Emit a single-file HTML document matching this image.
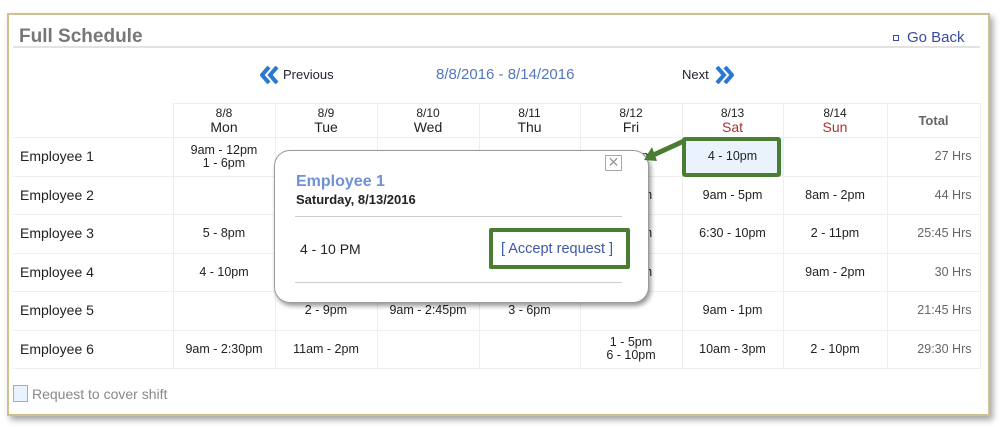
<!DOCTYPE html>
<html><head><meta charset="utf-8"><style>
*{margin:0;padding:0;box-sizing:border-box}
body{width:1000px;height:427px;background:#fff;font-family:"Liberation Sans",Arial,sans-serif;position:relative;overflow:hidden;color:#222}
.panel{position:absolute;left:7px;top:13px;width:983px;height:403px;border:2px solid #cfc18e;background:#fff;box-shadow:3px 4px 6px rgba(0,0,0,.35)}
.a{position:absolute}
table{position:absolute;left:13px;top:103px;border-collapse:collapse;font-size:12.5px}
td{border:1px solid #eee;text-align:center;height:38.5px;padding:0;line-height:13px}
td.n{text-align:left;padding-left:7px;font-size:14px;width:160px;border-left:none}
td.t{text-align:right;padding-right:8px;color:#666;width:93px}
tr.h td{height:34px;font-size:12px}
tr.h td span{font-size:14px;display:block;line-height:15px}
tr.h td.e{border:none;border-bottom:1px solid #eee}
.red{color:#b03030}
</style></head><body>
<div class="panel"></div>
<div class="a" style="left:19px;top:26px;font-size:19px;font-weight:bold;color:#777">Full Schedule</div>
<div class="a" style="left:13px;top:46px;width:967px;height:2px;background:#e2e2e2"></div>
<div class="a" style="left:893px;top:35px;width:6px;height:6px;border:1.5px solid #3a4aa0"></div>
<div class="a" style="left:907px;top:29px;font-size:15px;color:#3a4aa0">Go Back</div>
<svg class="a" style="left:260px;top:66px" width="20" height="18" viewBox="0 0 20 18"><path d="M9 1 L2 9 L9 17 M17 1 L10 9 L17 17" fill="none" stroke="#2a78d0" stroke-width="4"/></svg>
<div class="a" style="left:283px;top:67px;font-size:13px;color:#223">Previous</div>
<div class="a" style="left:436px;top:66px;font-size:15px;color:#5577bb">8/8/2016 - 8/14/2016</div>
<div class="a" style="left:682px;top:67px;font-size:13px;color:#223">Next</div>
<svg class="a" style="left:714px;top:66px" width="20" height="18" viewBox="0 0 20 18"><path d="M3 1 L10 9 L3 17 M11 1 L18 9 L11 17" fill="none" stroke="#2a78d0" stroke-width="4"/></svg>
<table>
<tr class="h"><td class="e" style="width:160px"></td><td style="width:102px">8/8<span>Mon</span></td><td style="width:102px">8/9<span>Tue</span></td><td style="width:102px">8/10<span>Wed</span></td><td style="width:101px">8/11<span>Thu</span></td><td style="width:102px">8/12<span>Fri</span></td><td style="width:101px">8/13<span class="red">Sat</span></td><td style="width:104px">8/14<span class="red">Sun</span></td><td class="t" style="text-align:center;padding:0;font-size:13px;color:#666;font-weight:bold">Total</td></tr>
<tr><td class="n">Employee 1</td><td>9am - 12pm<br>1 - 6pm</td><td></td><td></td><td></td><td>1 - 5pm</td><td style="background:#eaf3fd">4 - 10pm</td><td></td><td class="t">27 Hrs</td></tr>
<tr><td class="n">Employee 2</td><td></td><td></td><td></td><td></td><td>1 - 5pm</td><td>9am - 5pm</td><td>8am - 2pm</td><td class="t">44 Hrs</td></tr>
<tr><td class="n">Employee 3</td><td>5 - 8pm</td><td></td><td></td><td></td><td>2 - 8pm</td><td>6:30 - 10pm</td><td>2 - 11pm</td><td class="t">25:45 Hrs</td></tr>
<tr><td class="n">Employee 4</td><td>4 - 10pm</td><td></td><td></td><td></td><td>1 - 5pm</td><td></td><td>9am - 2pm</td><td class="t">30 Hrs</td></tr>
<tr><td class="n">Employee 5</td><td></td><td>2 - 9pm</td><td>9am - 2:45pm</td><td>3 - 6pm</td><td></td><td>9am - 1pm</td><td></td><td class="t">21:45 Hrs</td></tr>
<tr><td class="n">Employee 6</td><td>9am - 2:30pm</td><td>11am - 2pm</td><td></td><td></td><td>1 - 5pm<br>6 - 10pm</td><td>10am - 3pm</td><td>2 - 10pm</td><td class="t">29:30 Hrs</td></tr>
</table>
<div class="a" style="left:682px;top:137px;width:99px;height:40px;border:4px solid #4a7d32;border-radius:3px"></div>
<div class="a" style="left:13px;top:385px;width:15px;height:17px;border:1px solid #8ab0e8;background:#eaf3fd"></div>
<div class="a" style="left:32px;top:386px;font-size:14px;color:#888">Request to cover shift</div>
<div class="a" style="left:274px;top:150px;width:375px;height:153px;background:#fff;border:1.5px solid #999;border-radius:16px;box-shadow:2px 3px 5px rgba(0,0,0,.4)"></div>
<div class="a" style="left:605px;top:155px;width:17px;height:16px;border:1px solid #aaa;color:#999;font-size:14px;line-height:13px;text-align:center">✕</div>
<div class="a" style="left:296px;top:173px;font-size:16px;font-weight:bold;color:#7090d8">Employee 1</div>
<div class="a" style="left:296px;top:192px;font-size:13px;font-weight:bold;color:#222">Saturday, 8/13/2016</div>
<div class="a" style="left:295px;top:216px;width:327px;height:1px;background:#ccc"></div>
<div class="a" style="left:300px;top:241px;font-size:14px;color:#222">4 - 10 PM</div>
<div class="a" style="left:489px;top:228px;width:141px;height:41px;border:4px solid #4a7d32;border-radius:2px"></div>
<div class="a" style="left:501px;top:241px;font-size:14.5px;color:#3a5aa8">[ Accept request ]</div>
<div class="a" style="left:295px;top:282px;width:327px;height:1px;background:#ccc"></div>
<svg class="a" style="left:640px;top:135px" width="50" height="30" viewBox="0 0 50 30"><path d="M44 6 L9 22" stroke="#4a7d32" stroke-width="5" fill="none"/><path d="M4 25 L12 12 L17 26 Z" fill="#4a7d32"/></svg>
</body></html>
